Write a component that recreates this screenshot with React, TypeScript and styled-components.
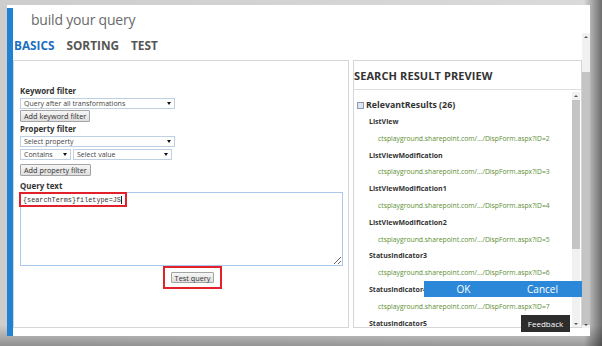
import React from "react";
import styled, { createGlobalStyle } from "styled-components";

const GlobalStyle = createGlobalStyle`
  html, body {
    margin: 0;
    padding: 0;
  }
  body {
    font-family: "Open Sans", "Noto Sans", sans-serif;
    background: #c8c8c8;
  }
`;

const Frame = styled.div`
  width: 602px;
  height: 346px;
  box-sizing: border-box;
  padding: 5px 12px 10px 7px;
  display: flex;
  background: linear-gradient(to bottom, rgba(0, 0, 0, 0) 94%, rgba(0, 0, 0, 0.3) 100%),
    linear-gradient(to right, #cdcdcd 0%, #dadada 97%, #6c6c6c 100%);
`;

const Dialog = styled.div`
  flex: 1;
  display: flex;
  background: #fff;
`;

const AccentBar = styled.div`
  width: 6px;
  margin-top: 3px;
  background: #1f82d2;
`;

const Content = styled.div`
  flex: 1;
  min-width: 0;
  display: flex;
  flex-direction: column;
  padding-bottom: 8px;
`;

const Header = styled.div`
  flex-shrink: 0;
  height: 55px;
  display: flex;
  flex-direction: column;
`;

const Title = styled.div`
  padding: 2px 0 0 18px;
  height: 30px;
  font-size: 14px;
  line-height: 26px;
  color: #6a6a6a;
  letter-spacing: -0.2px;
`;

const Tabs = styled.div`
  display: flex;
  gap: 12px;
  padding-left: 1px;
`;

const Tab = styled.div<{ $active?: boolean }>`
  font-size: 11.8px;
  font-weight: 700;
  line-height: 16px;
  color: ${(p) => (p.$active ? "#1d6fbf" : "#555")};
`;

const Panels = styled.div`
  flex: 1;
  min-height: 0;
  display: flex;
  gap: 4px;
`;

const LeftPanel = styled.div`
  width: 336px;
  box-sizing: border-box;
  border: 1px solid #d6d6d6;
  padding: 24px 6px 0 6px;
  display: flex;
  flex-direction: column;
  overflow: hidden;
`;

const Label = styled.div<{ $gap?: number }>`
  font-size: 7.9px;
  font-weight: 700;
  color: #333;
  line-height: 12px;
  height: 12px;
  margin-top: ${(p) => p.$gap ?? 0}px;
`;

const Row = styled.div`
  display: flex;
  gap: 2px;
  margin-top: 2px;
`;

const SelectBox = styled.div<{ $width: number }>`
  width: ${(p) => p.$width}px;
  height: 11px;
  box-sizing: border-box;
  border: 1px solid #bfd0e2;
  padding: 0 3px;
  display: flex;
  align-items: center;
  justify-content: space-between;
  font-size: 7px;
  color: #444;
  margin-top: 1px;

  ${Row} & {
    margin-top: 0;
  }
`;

const Arrow = styled.span`
  width: 0;
  height: 0;
  border-left: 2px solid transparent;
  border-right: 2px solid transparent;
  border-top: 3px solid #111;
`;

const Button = styled.button<{ $top?: number }>`
  align-self: flex-start;
  height: 12px;
  box-sizing: border-box;
  margin: ${(p) => p.$top ?? 1}px 0 1px;
  padding: 0 3px;
  border: 1px solid #a4a4a4;
  border-radius: 1px;
  background: linear-gradient(#f6f6f6, #dedede);
  font-family: "Open Sans", "Noto Sans", sans-serif;
  font-size: 7.3px;
  line-height: 10px;
  color: #333;
`;

const QueryWrap = styled.div`
  position: relative;
`;

const QueryArea = styled.textarea`
  display: block;
  width: 323px;
  height: 74px;
  box-sizing: border-box;
  margin: 0;
  border: 1px solid #a9c9ec;
  padding: 3px 2px;
  font-family: "Liberation Mono", monospace;
  font-size: 6.8px;
  color: #333;
  outline: none;
  resize: both;
`;

const Highlight = styled.div<{ $w: number; $h: number; $x: number; $y: number }>`
  position: absolute;
  left: ${(p) => p.$x}px;
  top: ${(p) => p.$y}px;
  width: ${(p) => p.$w}px;
  height: ${(p) => p.$h}px;
  box-sizing: border-box;
  border: 2px solid #e3212b;
  pointer-events: none;
`;

const Caret = styled.span`
  position: absolute;
  left: 101px;
  top: 4px;
  width: 1px;
  height: 8px;
  background: #222;
`;

const TestRow = styled.div`
  padding-left: 143px;
`;

const TestBox = styled.div`
  width: 59px;
  height: 23px;
  box-sizing: border-box;
  border: 2px solid #e3212b;
  display: flex;
  align-items: center;
  justify-content: center;
`;

const TestButton = styled(Button)`
  align-self: center;
  margin: 0;
  height: 11px;
  width: 43px;
  padding: 0;
`;

const RightPanel = styled.div`
  flex: 1;
  min-width: 0;
  box-sizing: border-box;
  border: 1px solid #d6d6d6;
  display: flex;
  flex-direction: column;
  position: relative;
`;

const PreviewTitle = styled.div`
  flex-shrink: 0;
  height: 29px;
  box-sizing: border-box;
  border-bottom: 1px solid #dcdcdc;
  padding-top: 2px;
  font-size: 11px;
  font-weight: 700;
  color: #333;
  line-height: 25px;
  letter-spacing: 0.1px;
`;

const PreviewBody = styled.div`
  flex: 1;
  min-height: 0;
  display: flex;
  overflow: hidden;
`;

const ResultList = styled.div`
  flex: 1;
  padding-top: 6px;
  overflow: hidden;
`;

const Group = styled.div`
  display: flex;
  align-items: center;
  gap: 2px;
  padding-left: 3px;
  height: 18px;
  font-size: 8.8px;
  font-weight: 700;
  color: #333;
`;

const GroupIcon = styled.span`
  width: 5px;
  height: 5px;
  border: 1px solid #8c9cb0;
  background: #dfe6ef;
`;

const ResultLine = styled.div<{ $url?: boolean }>`
  height: 16.8px;
  line-height: 16.8px;
  white-space: nowrap;
  font-size: ${(p) => (p.$url ? "6.8px" : "7px")};
  font-weight: ${(p) => (p.$url ? 400 : 700)};
  color: ${(p) => (p.$url ? "#5c8f32" : "#333")};
  padding-left: ${(p) => (p.$url ? "24px" : "15px")};
`;

const ScrollTrack = styled.div<{ $thumbTop: number; $thumbBottom: number }>`
  width: 8px;
  flex-shrink: 0;
  position: relative;
  background: #f1f1f1;

  &::before {
    content: "";
    position: absolute;
    left: 0;
    right: 0;
    top: ${(p) => p.$thumbTop}px;
    bottom: ${(p) => p.$thumbBottom}px;
    background: #c4c4c4;
  }
`;

const ScrollArrow = styled.span<{ $down?: boolean }>`
  position: absolute;
  left: 2px;
  ${(p) => (p.$down ? "bottom: 2px;" : "top: 3px;")}
  width: 0;
  height: 0;
  border-left: 2px solid transparent;
  border-right: 2px solid transparent;
  ${(p) => (p.$down ? "border-top: 2px solid #555;" : "border-bottom: 2px solid #555;")}
`;

const InnerScroll = styled(ScrollTrack)`
  margin: 2px 1px 0 0;
`;

const OuterScroll = styled(ScrollTrack)`
  margin: 28px 0 8px;
`;

const ConfirmBar = styled.div`
  position: absolute;
  left: 70px;
  top: 220px;
  width: 158px;
  height: 16px;
  display: flex;
  background: #2b88d8;
`;

const ConfirmAction = styled.div`
  flex: 1;
  display: flex;
  align-items: center;
  justify-content: center;
  color: #fff;
  font-size: 10px;
`;

const FeedbackButton = styled.div`
  position: absolute;
  left: 167px;
  top: 254px;
  width: 49px;
  height: 17px;
  display: flex;
  align-items: center;
  justify-content: center;
  background: #2d2d2d;
  color: #fff;
  font-size: 8px;
`;

// the last entry sits at the bottom edge, its url is scrolled out of view
const results = [
  { title: "ListView", id: 2 },
  { title: "ListViewModification", id: 3 },
  { title: "ListViewModification1", id: 4 },
  { title: "ListViewModification2", id: 5 },
  { title: "StatusIndicator3", id: 6 },
  { title: "StatusIndicator4", id: 7 },
  { title: "StatusIndicator5" },
];

const App = () => (
  <>
    <GlobalStyle />
    <Frame>
      <Dialog>
        <AccentBar />
        <Content>
          <Header>
            <Title>build your query</Title>
            <Tabs>
              <Tab $active>BASICS</Tab>
              <Tab>SORTING</Tab>
              <Tab>TEST</Tab>
            </Tabs>
          </Header>
          <Panels>
            <LeftPanel>
              <Label>Keyword filter</Label>
              <SelectBox $width={155}>
                Query after all transformations
                <Arrow />
              </SelectBox>
              <Button>Add keyword filter</Button>
              <Label>Property filter</Label>
              <SelectBox $width={155}>
                Select property
                <Arrow />
              </SelectBox>
              <Row>
                <SelectBox $width={51}>
                  Contains
                  <Arrow />
                </SelectBox>
                <SelectBox $width={99}>
                  Select value
                  <Arrow />
                </SelectBox>
              </Row>
              <Button $top={4}>Add property filter</Button>
              <Label $gap={3}>Query text</Label>
              <QueryWrap>
                <QueryArea readOnly spellCheck={false} defaultValue="{searchTerms}filetype=JS" />
                <Highlight $x={-1} $y={0} $w={108} $h={15} />
                <Caret />
              </QueryWrap>
              <TestRow>
                <TestBox>
                  <TestButton>Test query</TestButton>
                </TestBox>
              </TestRow>
            </LeftPanel>
            <RightPanel>
              <PreviewTitle>SEARCH RESULT PREVIEW</PreviewTitle>
              <PreviewBody>
                <ResultList>
                  <Group>
                    <GroupIcon />
                    RelevantResults (26)
                  </Group>
                  {results.map((r) => (
                    <React.Fragment key={r.title}>
                      <ResultLine>{r.title}</ResultLine>
                      {r.id && (
                        <ResultLine $url>
                          ctsplayground.sharepoint.com/.../DispForm.aspx?ID={r.id}
                        </ResultLine>
                      )}
                    </React.Fragment>
                  ))}
                </ResultList>
                <InnerScroll $thumbTop={8} $thumbBottom={78}>
                  <ScrollArrow />
                  <ScrollArrow $down />
                </InnerScroll>
              </PreviewBody>
              <ConfirmBar>
                <ConfirmAction>OK</ConfirmAction>
                <ConfirmAction>Cancel</ConfirmAction>
              </ConfirmBar>
              <FeedbackButton>Feedback</FeedbackButton>
            </RightPanel>
          </Panels>
        </Content>
        <OuterScroll $thumbTop={39} $thumbBottom={3}>
          <ScrollArrow />
          <ScrollArrow $down />
        </OuterScroll>
      </Dialog>
    </Frame>
  </>
);

export default App;
